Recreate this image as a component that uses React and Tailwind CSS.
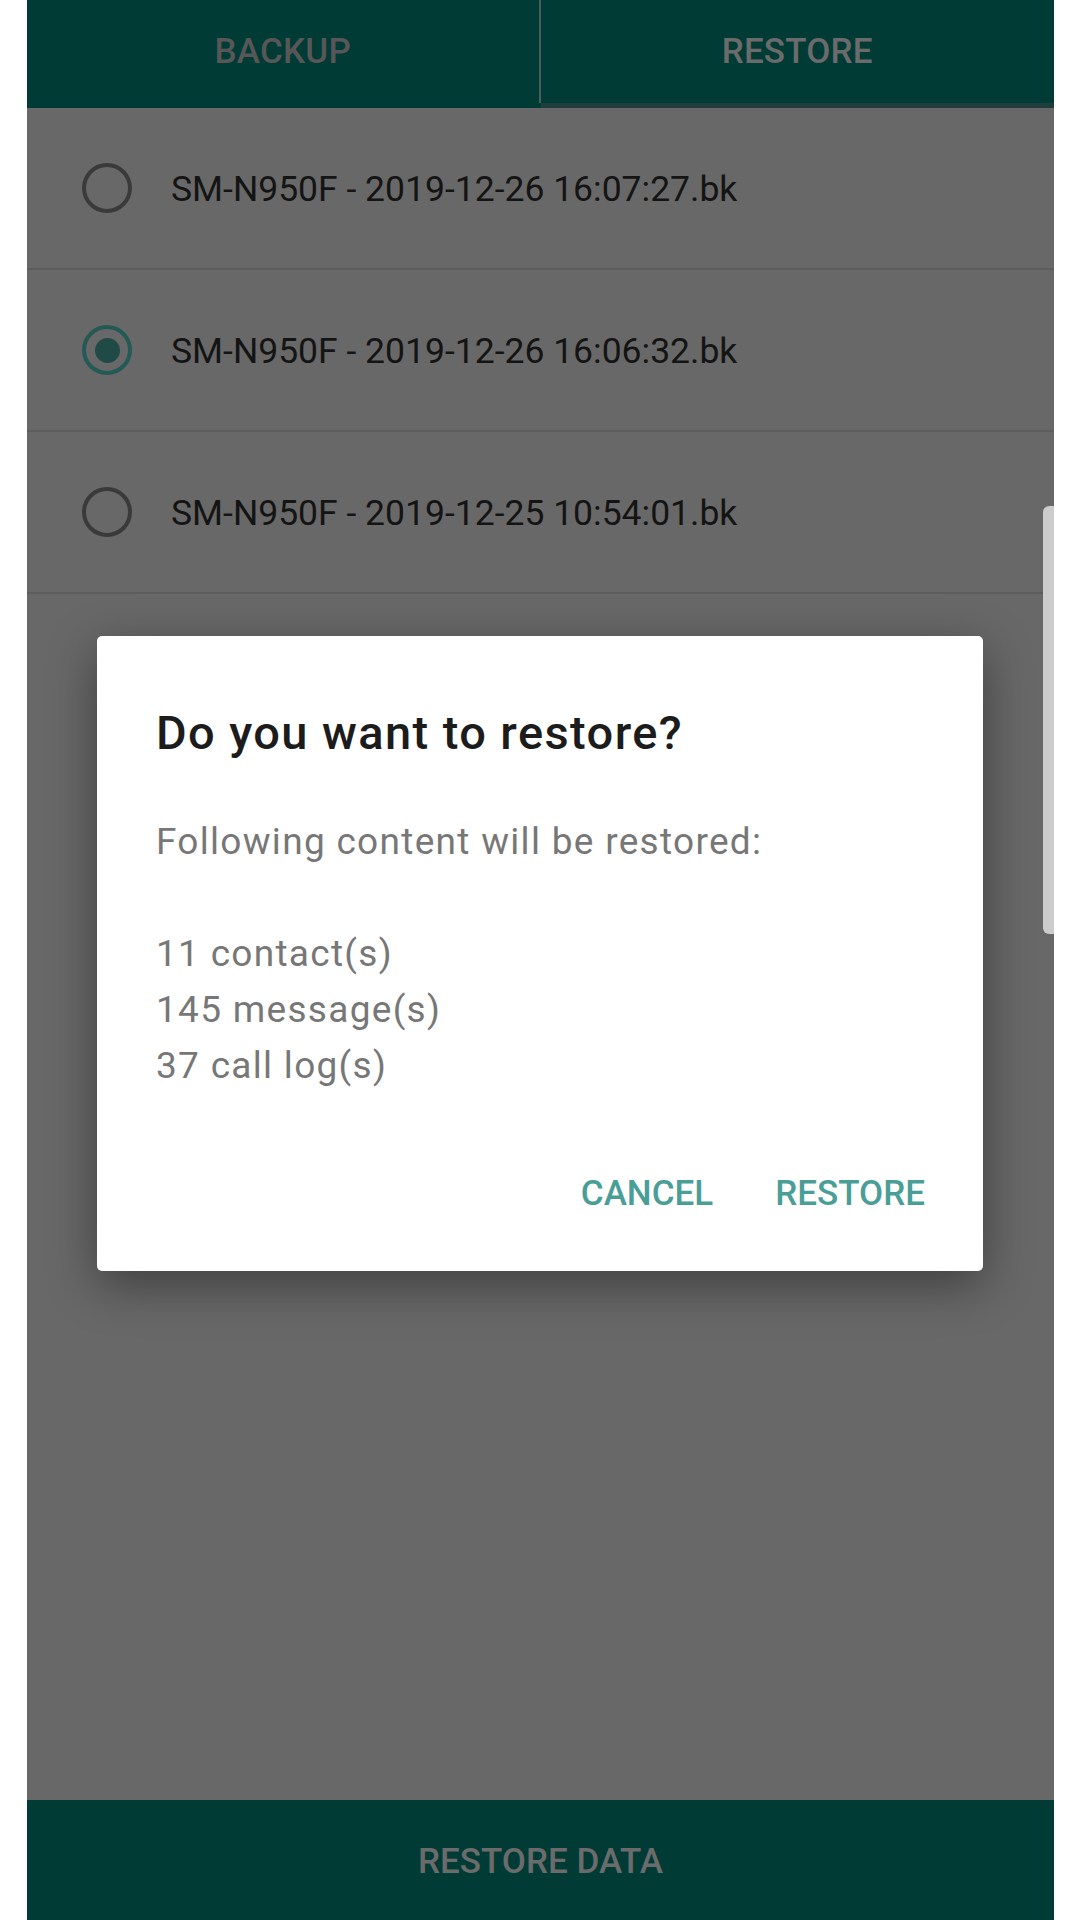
export default function App() {
  const rows = [
    { name: "SM-N950F - 2019-12-26 16:07:27.bk", selected: false },
    { name: "SM-N950F - 2019-12-26 16:06:32.bk", selected: true },
    { name: "SM-N950F - 2019-12-25 10:54:01.bk", selected: false },
  ];
  return (
    <div className="w-[1080px] h-[1920px] bg-white flex [font-family:Roboto,'Liberation_Sans',sans-serif]">
      <div className="relative ml-[27px] w-[1027px] h-[1920px] flex flex-col bg-[#686868] overflow-hidden">
        {/* Tabs */}
        <div className="h-[108px] flex bg-[#013b35] shrink-0">
          <div className="flex-1 flex flex-col">
            <div className="h-[103px] flex justify-center pt-[34px] border-r-2 border-[#4e5c5a]">
              <span className="text-[35px] leading-none font-medium text-[#575757] tracking-[0.2px]">BACKUP</span>
            </div>
            <div className="h-[5px]" />
          </div>
          <div className="flex-1 flex flex-col">
            <div className="h-[103px] flex justify-center pt-[34px]">
              <span className="text-[35px] leading-none font-medium text-[#6b6b6b] tracking-[0.2px]">RESTORE</span>
            </div>
            <div className="h-[5px] bg-[#1f3d3a]" />
          </div>
        </div>

        {/* List */}
        <div className="flex flex-col">
          {rows.map((r, i) => (
            <div key={i} className="h-[162px] flex items-center border-b-2 border-[#5d5d5d] pl-[55px]">
              {r.selected ? (
                <div className="w-[50px] h-[50px] rounded-full border-[4.5px] border-[#245a56] flex items-center justify-center shrink-0">
                  <div className="w-[25px] h-[25px] rounded-full bg-[#1f4a46]" />
                </div>
              ) : (
                <div className="w-[50px] h-[50px] rounded-full border-[4.5px] border-[#3a3a3a] shrink-0" />
              )}
              <span className="ml-[39px] mt-[3px] text-[35.5px] leading-none text-[#141414]">{r.name}</span>
            </div>
          ))}
        </div>

        <div className="flex-1" />

        {/* Bottom bar */}
        <div className="h-[120px] bg-[#013b35] flex justify-center pt-[44px] shrink-0">
          <span className="text-[35px] leading-none font-medium text-[#6b6b6b]">RESTORE DATA</span>
        </div>

        {/* Scrollbar */}
        <div className="absolute left-[1016px] top-[506px] w-[11px] h-[428px] bg-[#cccccc] rounded-l-[6px]" />

        {/* Dialog */}
        <div className="absolute left-[70px] top-[636px] w-[886px] h-[635px] bg-white rounded-[5px] shadow-[0_14px_48px_rgba(0,0,0,0.4)] flex flex-col pl-[59px] pr-[58px] pt-[73px]">
          <div className="text-[47px] leading-none font-medium text-[#1c1c1c] tracking-[1.4px]">Do you want to restore?</div>
          <div className="mt-[58px] text-[37px] leading-[56px] text-[#777777] tracking-[1.3px]">
            <div>Following content will be restored:</div>
            <div className="h-[56px]" />
            <div>11 contact(s)</div>
            <div>145 message(s)</div>
            <div>37 call log(s)</div>
          </div>
          <div className="mt-[82px] flex justify-end gap-[62px]">
            <span className="text-[35px] leading-none font-medium text-[#4a9e98]">CANCEL</span>
            <span className="text-[35px] leading-none font-medium text-[#4a9e98]">RESTORE</span>
          </div>
        </div>
      </div>
    </div>
  );
}
